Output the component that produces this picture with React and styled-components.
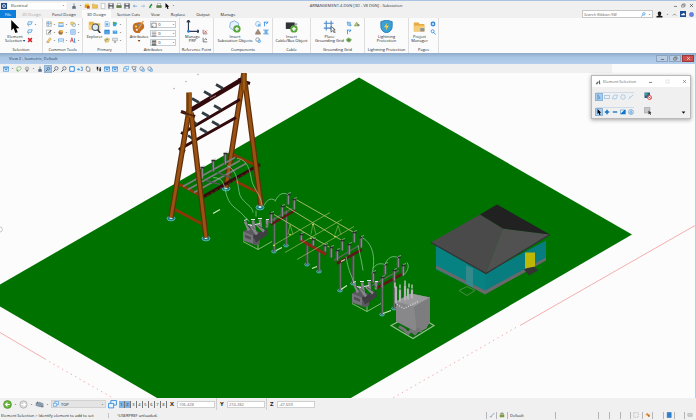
import React from "react";
import styled, { createGlobalStyle } from "styled-components";

const GlobalStyle = createGlobalStyle`
  * {
    box-sizing: border-box;
  }
  body {
    background: #f0f0f0;
    color: #222;
    font-family: "Open Sans", "Noto Sans", sans-serif;
    font-size: 4px;
    line-height: 5px;
    margin: 0;
  }
  button, input, select {
    background: none;
    border: 0;
    border-radius: 0;
    color: inherit;
    font: inherit;
    margin: 0;
    padding: 0;
  }
  svg {
    display: block;
  }
`;

const BLUE = "#1e80d8";
const GRAY = "#7c8288";

// Icons, all drawn on a 16 x 16 grid

const shapes = {
  caret: <path d="M3 6h10l-5 5z" fill="#555" />,
  cursor: <path d="M4 0v13l3-3 2 6 3-1-2-5h4z" fill="#050505" />,
  fence: (
    <g fill="none" stroke={BLUE} strokeWidth="1.5">
      <path d="M4 2h10l-3 7H1z" fill="#e6f1fb" />
      <path d="M3 10l2 5" stroke={GRAY} />
    </g>
  ),
  cross: <path d="M3 3l10 10M13 3L3 13" stroke="#d9202c" strokeWidth="4" />,
  sheet: (
    <g fill="none" stroke={GRAY} strokeWidth="1.4">
      <path d="M2 2h12v12H2z" fill="#fff" />
      <path d="M2 6h12M6 2v12" stroke={BLUE} />
      <path d="M9 10l5-5" stroke="#e08a1c" strokeWidth="2" />
    </g>
  ),
  layers: (
    <g>
      <path d="M1 3h14v3H1z" fill="#e3a83a" />
      <path d="M2 7h12v6H2z" fill="#eef5fc" stroke={BLUE} />
      <path d="M1 14h14" stroke={BLUE} strokeWidth="2" />
    </g>
  ),
  globe: (
    <g>
      <path d="M2 3h8l4 5-6 6-6-4z" fill="#f5cf6b" stroke="#c08b2b" />
      <circle cx="11" cy="11" r="4" fill="#e9f2fb" stroke={BLUE} />
    </g>
  ),
  pen: (
    <g>
      <path d="M1 3h11v11H1z" fill="#fff" stroke="#555" />
      <path d="M5 11l8-9 2 2-8 8z" fill="#444" />
    </g>
  ),
  ball: (
    <g>
      <circle cx="7" cy="9" r="6" fill="#b06a20" />
      <path d="M4 7l8-5 2 4-6 4z" fill="#efb34d" />
      <circle cx="5" cy="11" r="2" fill="#4f7ec4" />
    </g>
  ),
  pattern: (
    <g fill="#e9f3fd" stroke={BLUE} strokeWidth="1.3">
      <path d="M2 2h12v12H2z" />
      <path d="M2 8h12M8 2v12" strokeDasharray="2 1" />
    </g>
  ),
  ruler: (
    <g>
      <path d="M2 13L10 2l4 3-7 9z" fill="#f6d27a" stroke="#a77918" />
      <path d="M1 15h8" stroke="#555" />
    </g>
  ),
  slot: (
    <g fill="none" stroke={BLUE} strokeWidth="1.4">
      <path d="M1 5h14v6H1z" fill="#e9f3fd" />
      <path d="M1 13v2M15 13v2" />
    </g>
  ),
  letter: (
    <g fill="none" strokeWidth="2">
      <path d="M1 14L5 2l4 12M3 10h5" stroke="#d22f2f" />
      <path d="M12 3v11M10 14h5" stroke={BLUE} />
    </g>
  ),
  explorer: (
    <g>
      <path d="M1 2h6l1 2h7v8H1z" fill="#e8b749" />
      <path d="M1 6h14v6H1z" fill="#f6d589" />
      <circle cx="9" cy="9" r="4" fill="#dfe9f2" stroke="#4a5560" strokeWidth="1.3" />
      <path d="M12 12l3 4" stroke="#333" strokeWidth="2" />
    </g>
  ),
  page: (
    <g>
      <path d="M3 1h8l3 3v11H3z" fill="#e8f3fd" stroke={BLUE} />
      <path d="M5 6h6v6H5z" fill="#6fa8dc" />
    </g>
  ),
  table: (
    <g>
      <path d="M1 2h14v12H1z" fill={BLUE} />
      <path d="M3 6h10M3 9h10M3 12h10" stroke="#cfe6fb" />
    </g>
  ),
  folder: (
    <g>
      <path d="M1 6l7-4 7 3-3 8-9 1z" fill="#f1d27c" stroke="#b8963a" />
      <path d="M3 9l8-3" stroke={BLUE} strokeWidth="2" />
    </g>
  ),
  link: (
    <g>
      <path d="M2 8l8-6 4 4-4 8H3z" fill="#39a9dc" />
      <circle cx="5" cy="5" r="3" fill="#52a845" />
    </g>
  ),
  attach: (
    <g>
      <path d="M2 4h12v9H2z" fill="#4aa3e6" />
      <path d="M2 4l4-2h4v5z" fill="#b7dcf7" />
    </g>
  ),
  model: (
    <g fill="#dfe3e6" stroke={GRAY}>
      <path d="M1 3h14v7H1z" />
      <path d="M5 14h6M8 10v4" strokeWidth="2" />
    </g>
  ),
  palette: (
    <g>
      <path d="M7 3c5-1 8 1 8 5s-4 4-5 7-9 1-9-5 2-6 6-7z" fill="#c36d22" />
      <circle cx="5" cy="8" r="1.3" fill="#f6dc5b" />
      <circle cx="9" cy="6" r="1.3" fill="#4d9bea" />
      <circle cx="6" cy="12" r="1.3" fill="#f2f2f2" />
      <path d="M8 11l6-10" stroke="#d7a15a" strokeWidth="1.5" />
    </g>
  ),
  square: <path d="M2 3h12v11H2zM2 14l4-4" fill="#fff" stroke="#555" strokeWidth="1.6" />,
  lines: <path d="M2 3h12M2 7h12M2 11h12M2 14h12" stroke="#666" strokeWidth="1.6" />,
  weight: <path d="M2 3h12M2 8h12M2 13h12" stroke="#444" strokeWidth="3" />,
  axis: (
    <g fill="none" stroke="#2e3c55" strokeWidth="1.4">
      <path d="M3 1v13h13" />
      <path d="M1 3l2-3 2 3M14 12l2 2-2 2" />
      <circle cx="3" cy="14" r="1" fill={BLUE} stroke={BLUE} />
    </g>
  ),
  axisOff: (
    <g fill="none" strokeWidth="1.8">
      <path d="M3 2v11h11" stroke="#555" />
      <path d="M6 4l7 7M13 4l-7 7" stroke="#d22f2f" />
    </g>
  ),
  axisSet: (
    <g fill="none" stroke="#444" strokeWidth="1.8">
      <path d="M3 2v11h11" />
      <path d="M6 9l4-5 3 4" />
    </g>
  ),
  insert: (
    <g>
      <path d="M3 3l5-2 5 3v6l-6 3-5-4z" fill="#e7f2fc" stroke="#6ba5df" />
      <circle cx="11" cy="11" r="4.5" fill="#5aa53a" />
      <path d="M11 8.5v5M8.5 11h5" stroke="#fff" strokeWidth="1.5" />
    </g>
  ),
  hexes: (
    <g fill="#edf5fc" stroke={BLUE}>
      <path d="M4 2l6-1 4 5-3 7-7 1-3-6z" />
      <path d="M9 9h5v5H9z" fill="#9fc5e8" />
    </g>
  ),
  tower: <path d="M6 2h4v5h3l2 7H1l2-7h3z" fill="#a58a78" stroke="#6f5a4c" />,
  peak: (
    <g>
      <path d="M1 13L7 3l7 10z" fill="#b7cf6e" stroke="#6d8a35" strokeWidth="1.5" />
      <path d="M9 8h5v5H9z" fill="#7d8790" />
    </g>
  ),
  bay: (
    <g fill="none" stroke={BLUE} strokeWidth="2">
      <path d="M2 3h12M4 3v11M12 3v3M8 8l4-3" />
    </g>
  ),
  bus: (
    <g fill="none" stroke={BLUE} strokeWidth="2">
      <path d="M1 3h14M3 8h10M1 13h14M8 3v10" />
    </g>
  ),
  cable: (
    <g>
      <path d="M1 3h11v8H1z" fill="#2e3338" />
      <path d="M12 5h3M12 8h3" stroke="#9aa2a8" strokeWidth="2" />
      <circle cx="11" cy="11" r="4.5" fill="#5aa53a" />
      <path d="M11 8.5v5M8.5 11h5" stroke="#fff" strokeWidth="1.5" />
    </g>
  ),
  grid: (
    <g>
      <path d="M4 1v12M10 1v12M1 4h12M1 10h12" stroke="#4a86c5" strokeWidth="1.3" />
      <path d="M10 8v7l2-2 2 3 1-1-2-3h2z" fill="#fff" stroke="#333" strokeWidth=".8" />
    </g>
  ),
  gridSmall: (
    <path d="M5 1v10M11 3v11M2 5h10M4 11h11" stroke={BLUE} strokeWidth="1.8" />
  ),
  rod: (
    <g>
      <path d="M1 6l6-4 8 5-6 7-7-3z" fill="#8fbf6a" stroke="#4c8a35" />
      <path d="M6 5v6M10 6v5" stroke="#2d5e22" strokeWidth="2" />
    </g>
  ),
  shield: (
    <g>
      <path d="M8 0l7 2v6c0 4-3 7-7 8-4-1-7-4-7-8V2z" fill="#39a0d8" stroke="#2275ab" />
      <path d="M9 3L5 9h3l-1 4 4-6H8z" fill="#ffd53b" />
    </g>
  ),
  project: (
    <g>
      <path d="M1 3h6l1 2h6v9H1z" fill="#e6ab43" />
      <path d="M1 7h13v7H1z" fill="#f3cd78" />
      <path d="M9 10h5v4H9z" fill="#8894a1" />
    </g>
  ),
  gear: (
    <g fill="none" stroke={BLUE}>
      <circle cx="8" cy="8" r="5" strokeWidth="3" />
      <circle cx="8" cy="8" r="1.5" />
    </g>
  ),
  search: (
    <g fill="none" stroke={BLUE} strokeWidth="2">
      <circle cx="7" cy="6" r="4" />
      <path d="M10 9l5 6" />
    </g>
  ),
  find: (
    <g fill="none" stroke={BLUE} strokeWidth="2">
      <circle cx="9" cy="6" r="4" />
      <path d="M6 9l-5 6" />
    </g>
  ),
  zoomIn: (
    <g fill="none" stroke="#3c4650" strokeWidth="1.6">
      <circle cx="9" cy="6" r="4.5" fill="#e5f0fa" />
      <path d="M6 10l-5 5" strokeWidth="2.5" />
    </g>
  ),
  zoomWindow: (
    <g fill="none" stroke="#3c4650" strokeWidth="1.6">
      <path d="M1 1h14v14H1z" stroke="#9ab9d6" />
      <circle cx="9" cy="7" r="3.5" />
      <path d="M6 10l-4 4" strokeWidth="2" />
    </g>
  ),
  fit: <path d="M2 2h12v12H2z" fill="#fff" stroke={BLUE} strokeWidth="2.5" />,
  rotate: (
    <g fill="none" stroke={BLUE} strokeWidth="2">
      <path d="M1 9h7M5 6L2 9l3 3M10 3h4v9h-4" />
    </g>
  ),
  pan: <path d="M4 2h5l4 4v8H6L3 9z" fill="#f2f2f2" stroke="#444" strokeWidth="1.5" />,
  walk: <path d="M2 2h4v7H2zM9 6h4v8H9zM3 10h3v2H3zM10 3h3v2h-3z" fill="#222" />,
  windows: (
    <g fill="#e7f2fc" stroke={BLUE} strokeWidth="1.6">
      <path d="M1 2h14v12H1z" />
      <path d="M1 5h14M5 9h6" strokeWidth="2.5" />
    </g>
  ),
  copyView: (
    <g fill="#eaf4fd" stroke={BLUE} strokeWidth="1.4">
      <path d="M5 1h10v8H5z" />
      <path d="M1 6h9v8H1z" />
    </g>
  ),
  clip: (
    <g fill="none" stroke="#4f5961" strokeWidth="1.5">
      <path d="M2 2h12l-3 7H5z" />
      <circle cx="10" cy="12" r="3" stroke={BLUE} />
    </g>
  ),
  mask: (
    <g fill="none" stroke="#5c6b78" strokeWidth="1.5">
      <circle cx="7" cy="7" r="5" />
      <path d="M8 8h6v6H8z" fill="#dbeafa" stroke={BLUE} />
    </g>
  ),
  display: (
    <g>
      <path d="M3 3l9-1 2 6-8 6-4-5z" fill="#eef6ea" stroke="#67a458" strokeWidth="1.4" />
      <circle cx="4" cy="12" r="2.5" fill="#6bb95a" />
    </g>
  ),
  bulb: (
    <g>
      <circle cx="8" cy="7" r="5" fill="#c9ccc6" stroke="#7b7f77" />
      <path d="M6 13h4" stroke="#444" strokeWidth="3" />
    </g>
  ),
  brush: <path d="M7 1h2v7h3l1 7H3l1-7h3z" fill="#5b6d7d" />,
  person: <path d="M8 1c3 0 4 2 4 4s-1 4-2 5l5 2v3H1v-3l5-2C5 9 4 7 4 5s1-4 4-4z" fill="#1b1b1b" />,
  database: (
    <g>
      <ellipse cx="8" cy="4" rx="6" ry="3" fill="#f4cc4f" />
      <path d="M2 5v8h12V5z" fill="#e39b22" />
      <path d="M8 8h7v7H8z" fill="#b8532e" />
    </g>
  ),
  openFolder: <path d="M1 3h5l2 2h7v9H1z" fill="#efc14d" stroke="#c08f25" />,
  blank: <path d="M3 1h10v14H3z" fill="#fff" stroke={GRAY} />,
  save: (
    <g>
      <path d="M1 1h14v14H1z" fill="#454b52" />
      <path d="M4 1h8v5H4zM4 9h8v6H4z" fill="#eceff1" />
    </g>
  ),
  undo: <path d="M2 8l5-4v3h7v2H7v3z" fill="#6fa6dd" />,
  redo: <path d="M14 8L9 4v3H2v2h7v3z" fill="#9cbfe0" />,
  pin: <path d="M9 1l3 4-4 4 1 6-3-4-4 4 2-7z" fill="#2f8f46" />,
  print: (
    <g>
      <path d="M4 1h8v6H4z" fill="#fff" stroke="#666" />
      <path d="M1 6h14v7H1z" fill="#5e7e4a" />
    </g>
  ),
  circleTool: <circle cx="8" cy="8" r="6" fill="none" stroke="#76b0e6" strokeWidth="1.5" />,
  blockTool: <path d="M1 4h14v8H1z" fill="none" stroke="#76b0e6" strokeWidth="1.5" />,
  shapeTool: <path d="M5 3h10l-4 10H1z" fill="none" stroke="#76b0e6" strokeWidth="1.5" />,
  lineTool: <path d="M1 14L14 2M3 9l3-1" fill="none" stroke="#76b0e6" strokeWidth="1.5" />,
  handTool: <path d="M5 2v12l3-3h3z" fill="none" stroke="#2d78bd" strokeWidth="1.5" />,
  plus: <path d="M8 2v12M2 8h12" stroke="#1372c4" strokeWidth="4" />,
  minus: <path d="M2 8h12" stroke="#1372c4" strokeWidth="3.5" />,
  invert: (
    <g>
      <path d="M1 2h14v12H1z" fill="#1372c4" />
      <path d="M2 3h9l-9 9z" fill="#fff" />
    </g>
  ),
  clear: (
    <g fill="none" stroke="#3987ce" strokeWidth="1.5">
      <circle cx="8" cy="8" r="6.5" />
      <path d="M8 4l3 7H5z" />
    </g>
  ),
  disable: (
    <g>
      <path d="M1 1h11v11H1z" fill="#2c5f86" />
      <path d="M2 2h5v5H2z" fill="#3da48e" />
      <circle cx="11" cy="11" r="4" fill="#fff" stroke="#d83a3a" strokeWidth="1.8" />
      <path d="M8 9l6 4" stroke="#d83a3a" strokeWidth="1.8" />
    </g>
  ),
  individual: (
    <g>
      <path d="M1 1h11v11H1z" fill="#c4c6c8" stroke="#8e9194" />
      <path d="M9 7v8l2-2 2 3 1-1-1-3h2z" fill="#333" />
    </g>
  ),
  more: <path d="M2 5h12l-6 7z" fill="#111" />,
  logo: <path d="M2 14l4-8 2 3 5-7 1 12h-3l-1-6-4 6z" fill="#5c6268" />,
  back: (
    <g>
      <circle cx="8" cy="8" r="7" fill="#69b53c" stroke="#3e8526" />
      <path d="M12 8H5M8 4.5L4.5 8 8 11.5" stroke="#fff" strokeWidth="2" fill="none" />
    </g>
  ),
  forward: (
    <g>
      <circle cx="8" cy="8" r="6.5" fill="#dcdcdc" stroke="#9a9a9a" />
      <path d="M4 8h7M8 4.5l3.5 3.5L8 11.5" stroke="#fff" strokeWidth="2" fill="none" />
    </g>
  ),
  camera: (
    <g>
      <path d="M1 6l7-3 7 3v5l-6 2-8-3z" fill="#8b9aab" />
      <path d="M3 6l2-3M11 12h4" stroke="#4e6379" strokeWidth="2" />
    </g>
  ),
  snap: <path d="M2 13h4l2-4 6-6" fill="none" stroke="#6b86b3" strokeWidth="2" />,
  lock: (
    <g>
      <path d="M2 7h12v7H2z" fill="#7a9a3b" />
      <path d="M5 7V3h6v4" fill="none" stroke="#5d6a43" strokeWidth="2" />
    </g>
  ),
  fenceBox: <path d="M2 2h12v12H2z" fill="none" stroke="#999" strokeWidth="1.5" strokeDasharray="3 2" />,
  badge: (
    <g>
      <path d="M1 7l6-5 2 4 6 1-6 7-2-4z" fill="#e3912e" />
      <path d="M8 8l4 5" stroke="#b0481f" strokeWidth="2" />
    </g>
  ),
  book: <path d="M3 1h11v14H3z" fill="#2c7fd0" stroke="#1b5fa6" />,
  dots: <path d="M2 4h12v7H2zM5 11v3M11 11v3" fill="#cfcfcf" stroke="#9a9a9a" />,
  app: (
    <g>
      <path d="M0 0h16v16H0z" fill="#234f8e" />
      <circle cx="8" cy="8" r="4" fill="none" stroke="#fff" strokeWidth="2" />
    </g>
  ),
  minimize: <path d="M3 11h10" stroke="#444" strokeWidth="2" />,
  restore: <path d="M2 6h8v7H2zM5 6V3h8v7h-3" fill="none" stroke="#555" strokeWidth="1.8" />,
  box: <path d="M3 3h10v10H3z" fill="none" stroke="#ccc" strokeWidth="1.5" />,
  close: <path d="M3 3l10 10M13 3L3 13" stroke="currentColor" strokeWidth="1.8" />,
  up: <path d="M3 11l5-5 5 5" fill="none" stroke="#555" strokeWidth="2" />,
  help: <circle cx="8" cy="8" r="7" fill="#6d7fe0" stroke="#4456b6" />,
  cloud: (
    <g>
      <path d="M0 0h16v16H0z" fill="#1f4e91" />
      <path d="M3 11h10V8l-3-3-3 2-3 1z" fill="#fff" />
    </g>
  ),
};

const Icon = ({ name, size = 6 }) => (
  <Glyph $size={size} viewBox="0 0 16 16" aria-hidden="true">
    {shapes[name]}
  </Glyph>
);

const Tool = ({ icon, size, active }) => (
  <ToolButton type="button" aria-label={icon} $active={active}>
    <Icon name={icon} size={size} />
  </ToolButton>
);

const quickTools = ["brush", "caret", "database", "openFolder", "blank", "save", "print", "save", "undo", "redo", "pin", "print", "cursor", "caret"];

const tabs = ["2D Design", "Panel Design", "3D Design", "Section Cuts", "View", "Replace", "Output", "Manage"];

// one list per block of the view toolbar
const viewTools = [
  ["windows", "caret", "display", "bulb", "caret", "brush", "zoomWindow", "zoomIn", "zoomIn", "fit", "rotate", "pan"],
  ["walk", "windows", "windows"],
  ["copyView", "clip", "mask", "mask"],
];

const TitleBar = () => (
  <Title>
    <Icon name="app" size={6} />
    <Picker $width={60}>
      <select aria-label="Workflow" defaultValue="Electrical">
        <option>Electrical</option>
      </select>
      <Icon name="caret" size={3} />
    </Picker>
    <QuickBar>
      {quickTools.map((icon, i) => (
        <Tool key={i} icon={icon} size={icon === "caret" ? 3 : 6} />
      ))}
    </QuickBar>
    <Caption>ARRANGEMENT-4.DGN [3D - V8 DGN] - Substation</Caption>
    <WindowControls>
      <Tool icon="minimize" size={5} />
      <Tool icon="restore" size={5} />
      <Tool icon="close" size={5} />
    </WindowControls>
  </Title>
);

const TabBar = () => (
  <Tabs>
    <FileTab type="button">File</FileTab>
    {tabs.map((tab) => (
      <Tab key={tab} type="button" $active={tab === "3D Design"} $dim={tab === "2D Design"}>
        {tab}
      </Tab>
    ))}
    <TabTools>
      <SearchBox>
        <input aria-label="Search Ribbon" placeholder="Search Ribbon (F4)" />
        <Icon name="find" size={5} />
        <Icon name="caret" size={3} />
      </SearchBox>
      <Tool icon="person" size={7} />
      <Icon name="caret" size={3} />
      <Tool icon="up" size={5} />
      <Tool icon="cloud" size={6} />
      <Tool icon="help" size={5} />
    </TabTools>
  </Tabs>
);

const Launch = ({ icon, lines, size = 13 }) => (
  <LaunchButton type="button">
    <Icon name={icon} size={size} />
    <span>
      {lines.map((line) => (
        <Line key={line}>{line}</Line>
      ))}
    </span>
  </LaunchButton>
);

const Group = ({ label, width, children }) => (
  <RibbonGroup $width={width}>
    <GroupBody>{children}</GroupBody>
    <GroupLabel>{label}</GroupLabel>
  </RibbonGroup>
);

// a column of small tools, some with their own drop-down arrow
const Column = ({ icons, menu }) => (
  <ToolColumn>
    {icons.map((icon) => (
      <ToolRow key={icon}>
        <Tool icon={icon} />
        {menu && <Icon name="caret" size={3} />}
      </ToolRow>
    ))}
  </ToolColumn>
);

const Ribbon = () => (
  <RibbonBar>
    <Group label="Selection" width={43}>
      <Launch icon="cursor" lines={["Element", "Selection ▾"]} />
      <ToolColumn>
        <ToolRow>
          <Tool icon="fence" />
          <Icon name="caret" size={3} />
        </ToolRow>
        <ToolRow>
          <Tool icon="fence" />
        </ToolRow>
        <ToolRow>
          <Tool icon="cross" />
        </ToolRow>
      </ToolColumn>
    </Group>
    <Group label="Common Tools" width={40}>
      <Column icons={["sheet", "pen", "ruler"]} menu />
      <Column icons={["layers", "ball", "slot"]} menu />
      <Column icons={["globe", "pattern", "letter"]} menu />
    </Group>
    <Group label="Primary" width={44}>
      <Launch icon="explorer" lines={["Explorer"]} />
      <Column icons={["page", "table", "folder"]} />
      <Column icons={["link", "attach", "model"]} menu />
    </Group>
    <Group label="Attributes" width={53}>
      <Launch icon="palette" lines={["Attributes", "▾"]} />
      <ToolColumn>
        {["square", "lines", "weight"].map((icon) => (
          <Setting key={icon}>
            <Icon name={icon} size={6} />
            <select aria-label={icon} defaultValue="0">
              <option>0</option>
            </select>
            <Icon name="caret" size={3} />
          </Setting>
        ))}
      </ToolColumn>
    </Group>
    <Group label="Reference Point" width={34}>
      <Launch icon="axis" lines={["Manage", "PRP"]} />
      <ToolColumn>
        <ToolRow />
        <Tool icon="axisOff" />
        <Tool icon="axisSet" />
      </ToolColumn>
    </Group>
    <Group label="Components" width={59}>
      <Launch icon="insert" lines={["Insert", "Substation Objects"]} />
      <Column icons={["hexes", "tower", "mask"]} />
      <ToolColumn>
        <Tool icon="bay" />
        <Tool icon="bus" />
        <ToolRow />
      </ToolColumn>
    </Group>
    <Group label="Cable" width={38}>
      <Launch icon="cable" lines={["Insert", "Cable/Bus Object"]} />
    </Group>
    <Group label="Grounding Grid" width={54}>
      <Launch icon="grid" lines={["Place", "Grounding Grid"]} />
      <Column icons={["gridSmall", "bay", "rod"]} />
      <ToolColumn>
        <Tool icon="peak" />
        <ToolRow />
        <ToolRow />
      </ToolColumn>
    </Group>
    <Group label="Lightning Protection" width={44}>
      <Launch icon="shield" lines={["Lightning", "Protection"]} />
    </Group>
    <Group label="Pages" width={30}>
      <Launch icon="project" lines={["Project", "Manager"]} />
      <ToolColumn>
        <Tool icon="gear" />
        <Tool icon="search" />
        <ToolRow />
      </ToolColumn>
    </Group>
  </RibbonBar>
);

const ViewHeader = () => (
  <>
    <ViewTitle>
      <ViewName>View 2 - Isometric, Default</ViewName>
      <ViewButton type="button" aria-label="Minimize view">
        <Icon name="minimize" size={5} />
      </ViewButton>
      <ViewButton type="button" aria-label="Restore view">
        <Icon name="restore" size={5} />
      </ViewButton>
      <ViewButton type="button" aria-label="Close view" $close>
        <Icon name="close" size={5} />
      </ViewButton>
    </ViewTitle>
    <ViewTools>
      {viewTools.map((block, n) => (
        <ViewBlock key={n}>
          {block.map((icon, i) => (
            <Tool key={i} icon={icon} size={icon === "caret" ? 3 : 6} active={icon === "zoomWindow"} />
          ))}
        </ViewBlock>
      ))}
    </ViewTools>
  </>
);

// Scene

const Insulator = ({ x, y, h = 10 }) => (
  <g>
    <path d={`M${x} ${y}v${-h}`} stroke="#5b5b60" strokeWidth="2.6" />
    <path d={`M${x + 0.6} ${y}v${-h}`} stroke="#929297" strokeWidth="0.9" />
    <path d={`M${x - 1.5} ${y - h}h4`} stroke="#2c2c30" strokeWidth="1.6" />
    <path d={`M${x} ${y - h - 1}l3-1`} stroke="#c4c4c8" strokeWidth="0.6" />
  </g>
);

const Footing = ({ x, y, r = 4 }) => (
  <g>
    <ellipse cx={x} cy={y} rx={r} ry={r * 0.6} fill="#177f80" stroke="#63bcbc" strokeWidth="0.8" />
    <ellipse cx={x} cy={y - 0.5} rx={r * 0.4} ry={r * 0.25} fill="#d6f4f4" />
  </g>
);

const Post = ({ x, top, bottom }) => (
  <g>
    <Footing x={x} y={bottom} r={2.4} />
    <path d={`M${x} ${top}V${bottom}`} stroke="#4c524e" strokeWidth="2.4" />
    <path d={`M${x + 0.7} ${top}V${bottom}`} stroke="#8d8f90" strokeWidth="0.6" />
  </g>
);

const Leg = ({ d }) => (
  <g fill="none">
    <path d={d} stroke="#5e2f08" strokeWidth="5.4" />
    <path d={d} stroke="#9a5112" strokeWidth="3" />
  </g>
);

const Breaker = ({ x, y }) => (
  <g transform={`translate(${x} ${y})`}>
    <path d="M0 13l15 8 14-8M15 21l0-6" fill="none" stroke="#b7d7a8" strokeWidth="0.7" />
    <path d="M0 3l7-4 10 5v11l-4 2L0 12z" fill="#59595e" />
    <path d="M0 3l10 4v8L0 12z" fill="#74747a" />
    <path d="M2 6l6 2.5v3L2 9z" fill="#515156" />
    <path d="M10 7l14-7 1 6-12 8z" fill="#3e3e43" />
    <g stroke="#86868c" strokeWidth="2.6">
      <path d="M6 2L2-7M12 4L10-8M18 1L17-9M24-1V-9M14 6L7-4M21 3L14-4" />
    </g>
    <g stroke="#3c3c40" strokeWidth="0.7">
      <path d="M4-4L7 0M9-2L12 1M15-3l5 3M21-6l4 4M10 9l8-4" />
    </g>
    <g stroke="#e4e4ea" strokeWidth="1">
      <path d="M1-8l3-1M8-9l4 0M15-10l4 0M5-4l4 1M12-4l5-1M23-9l3 0" />
    </g>
  </g>
);

const Gantry = () => (
  <g fill="none">
    <g stroke="#8c3608" strokeWidth="2.8">
      <path d="M175 209l28 15M236 181l26 13M180 184l24 13M233 154l25 12" />
    </g>
    <Footing x="226" y="188" />
    <Leg d="M244 72l-18 115" />
    <g stroke="#7b7e7c" strokeWidth="1.8">
      <path d="M183 186l52-29M188 189l52-29M194 192l52-29" />
      <path d="M206 180l14 4M217 172l14 5" stroke="#54585a" />
    </g>
    <Insulator x={202} y={178} h={11} />
    <Insulator x={213} y={171} h={11} />
    <Insulator x={225} y={164} h={11} />
    <g stroke="#330a0c">
      <path d="M190 110l52-31" strokeWidth="4.6" />
      <path d="M187 130l53-31M179 149l57-32" strokeWidth="3" />
      <path d="M202 197l58-33" strokeWidth="3.2" />
      <path d="M181 111l14 5M238 79l12 4M181 132l6 3M179 148l6 3" strokeWidth="3" />
    </g>
    <path d="M210 98l6-3" stroke="#b98e92" strokeWidth="0.8" />
    <path d="M202 198l58-33" stroke="#823232" strokeWidth="0.6" strokeDasharray="3 2" />
    <g stroke="#323c42" strokeWidth="2.6">
      <path d="M216 84l7 4M204 91l7 4M192 98l7 4" />
      <path d="M214 105l7 4M202 112l7 4M192 120l5 4" />
      <path d="M212 121l7 4M200 128l7 4M188 135l6 4" />
    </g>
    <Footing x="171" y="218" />
    <Footing x="206" y="238" />
    <Footing x="260" y="207" />
    <Leg d="M245 82l16 123" />
    <Leg d="M189 110l-18 107" />
    <Leg d="M191 112l15 125" />
    <path d="M189 92v25M244 73v17" stroke="#75400d" strokeWidth="5.6" />
    <path d="M190 92v25M244 73v17" stroke="#a05815" strokeWidth="2.5" />
    <path d="M181 111l14 5" stroke="#4a2210" strokeWidth="1.5" />
  </g>
);

const Wires = () => (
  <g fill="none" stroke="#93cda0" strokeWidth="0.7">
    <path d="M213 177c12 0 11 10 14 19 4 12 12 12 19 22" />
    <path d="M227 165c12 5 10 21 13 30 4 8 13 11 13 17" />
    <path d="M237 158c14 1 13 20 16 26 5 10 8 13 9 21" />
    <path d="M264 205c4-8 9-7 11-5M275 201c4-9 9-9 13-7M246 217l3 4M256 210v6" />
    <path d="M346 256c2 12 4 16 8 26M358 245c2 9 4 18 5 25M362 237c13 7 13 25 10 36" />
    <path d="M373 268c4-6 8-5 12-4M385 264c3-8 8-9 13-7M407 262c3 4 0 10-4 13" />
  </g>
);

const Bay = () => (
  <g>
    <Post x={274} top={217} bottom={251} />
    <Post x={286} top={210} bottom={245} />
    <Post x={307} top={244} bottom={264} />
    <Post x={319} top={249} bottom={271} />
    <Post x={340} top={262} bottom={290} />
    <Post x={353} top={254} bottom={283} />
    <Post x={382} top={286} bottom={314} />
    <Post x={394} top={278} bottom={308} />
    <g stroke="#5c1a16" strokeWidth="2.6">
      <path d="M271 224l24-14M337 263l25-14M376 288l27-15" />
      <path d="M268 222l24-14M334 260l25-15M372 285l27-15" stroke="#6d6466" strokeWidth="1.2" />
      <path d="M300 239l26 15" stroke="#8c2418" strokeWidth="3" />
    </g>
    <g stroke="#a5b76c" strokeWidth="1" fill="none">
      <path d="M296 199l58 33M286 206l56 34M274 214l56 33" />
      <path d="M273 245l57-33M285 252l57-33M297 259l57-33" strokeWidth="0.7" />
      <path d="M288 234l2-10 3 10M311 234l2-11 3 11M335 234l3-9 3 9" strokeWidth="0.6" />
    </g>
    <g fill="#e6e85c">
      <circle cx="290" cy="234" r="0.8" />
      <circle cx="313" cy="224" r="0.8" />
      <circle cx="335" cy="236" r="0.8" />
      <circle cx="311" cy="238" r="0.8" />
      <circle cx="274" cy="245" r="0.8" />
    </g>
    {[[301, 240], [313, 245], [325, 251]].map(([x, y]) => (
      <Insulator key={x} x={x} y={y} h={6} />
    ))}
    {[[271, 223], [282, 216], [294, 209], [288, 204], [331, 257], [342, 250], [354, 242], [361, 247], [349, 254], [337, 260]].map(([x, y]) => (
      <Insulator key={x} x={x} y={y} />
    ))}
    {[[373, 282], [385, 274], [398, 267], [382, 287], [394, 280], [403, 275]].map(([x, y]) => (
      <Insulator key={x} x={x} y={y} />
    ))}
    <g stroke="#c9ebbc" strokeWidth="1.2">
      <path d="M213 213l7-4M276 250l6-3M312 268l5-2M341 289l6-4M383 313l8-3M341 261l4-2" />
    </g>
  </g>
);

const Transformer = () => (
  <g>
    <path d="M391 325l22 13 21-13-20-12z" fill="#0a6a0a" stroke="#8fc28c" strokeWidth="1.2" />
    <path d="M396 301l15-8 19 4v24l-4 7-9 4-21-11z" fill="#88888b" />
    <path d="M396 301l15-8 19 4-16 9z" fill="#9b9b9e" />
    <path d="M414 306l16-9v24l-4 7-9 4z" fill="#7d7d80" />
    <path d="M399 326l5 3 4 4 3-3 4 3 3-4 4 2" fill="none" stroke="#747477" strokeWidth="3" />
    <g stroke="#b3b3b8" strokeWidth="2.2">
      <path d="M396 303v-17M400 301v-12M405 300v-15M408 299v-11M412 298v-9" />
    </g>
    <g stroke="#e2e2e6" strokeWidth="1.1">
      <path d="M395 287v-5M400 288v-4M405 285v-5M409 287v-4M412 288v-4" />
      <path d="M397 304l7 4 14-7" strokeDasharray="1 1.5" fill="none" />
    </g>
  </g>
);

const House = () => (
  <g>
    <path d="M436 245v24l49 24v-20z" fill="#078282" />
    <path d="M485 273v20l61-34v-19z" fill="#087d80" />
    <path d="M436 265v3l49 26 61-34v-3l-61 33z" fill="#69686a" />
    <path d="M466 265l7 3v19l-7-4z" fill="#36898b" />
    <path d="M459 290l8-4 8 4-8 5z" fill="none" stroke="#4b8c43" />
    <path d="M524 269l9-4 5 5-9 5z" fill="#333" />
    <path d="M525 252h10v14l-10 2z" fill="#bdb806" />
    <path d="M431 242l49-28 23 14-17 45z" fill="#4a4a4b" />
    <path d="M503 228l47 6-64 39z" fill="#515152" />
    <path d="M480 214l17-10 53 30-47-6z" fill="#212122" />
    <path d="M431 242l55 31 64-39" fill="none" stroke="#323233" strokeWidth="1.2" />
  </g>
);

const Scene = () => (
  <Drawing viewBox="0 72 695 326" preserveAspectRatio="xMidYMid slice" role="img" aria-label="Substation">
    <path d="M0 284L359 77l273 157-282 164H158L0 306z" fill="#007200" />
    <g fill="none" stroke="#f08c8c" strokeWidth="0.7">
      <path d="M0 332l46 27M695 225L520 325" />
      <path d="M49 361l63 36M516 327L392 398" strokeDasharray="1.5 3.5" />
    </g>
    <circle cx="0" cy="229" r="2.5" fill="none" stroke="#aaa" strokeWidth="0.6" />
    <g fill="#c8a8a0">
      <circle cx="174" cy="88" r="0.8" />
      <circle cx="186" cy="81" r="0.8" />
      <circle cx="198" cy="74" r="0.8" />
    </g>
    <Gantry />
    <Bay />
    <Breaker x={243} y={228} />
    <Breaker x={352} y={290} />
    <Wires />
    <Transformer />
    <House />
  </Drawing>
);

const SelectionDialog = () => (
  <Dialog role="dialog" aria-label="Element Selection">
    <DialogTitle>
      <DialogName>
        <Icon name="logo" size={6} />
        Element Selection
      </DialogName>
      <Tool icon="minimize" size={5} />
      <Tool icon="box" size={5} />
      <Tool icon="close" size={5} />
    </DialogTitle>
    <DialogBody>
      <DialogRow>
        <ToolSet>
          <Tool icon="handTool" active />
          <Tool icon="blockTool" />
          <Tool icon="shapeTool" />
          <Tool icon="circleTool" />
          <Tool icon="lineTool" />
        </ToolSet>
        <Tool icon="disable" size={8} />
      </DialogRow>
      <DialogRow>
        <ToolSet>
          <Tool icon="cursor" active />
          <Tool icon="plus" />
          <Tool icon="minus" />
          <Tool icon="invert" />
          <Tool icon="clear" />
        </ToolSet>
        <Tool icon="individual" size={8} />
        <More>
          <Icon name="more" size={5} />
        </More>
      </DialogRow>
    </DialogBody>
  </Dialog>
);

const StatusBar = () => (
  <Status>
    <NavRow>
      <Tool icon="back" size={9} />
      <Icon name="caret" size={3} />
      <Tool icon="forward" size={9} />
      <Icon name="caret" size={3} />
      <Tool icon="camera" size={9} />
      <Icon name="caret" size={3} />
      <Picker $width={55} $gray>
        <Icon name="copyView" size={6} />
        <select aria-label="View group" defaultValue="TOP">
          <option>TOP</option>
        </select>
        <Icon name="caret" size={3} />
      </Picker>
      <Tool icon="copyView" size={9} />
      <ViewToggles>
        {[1, 2, 3, 4, 5, 6, 7, 8].map((n) => (
          <Toggle key={n} type="button" $on={n < 3}>
            {n}
          </Toggle>
        ))}
      </ViewToggles>
      {[["X", "106.428"], ["Y", "274.282"], ["Z", "-47.659"]].map(([axis, value]) => (
        <Coordinate key={axis}>
          <b>{axis}</b>
          <input defaultValue={value} />
        </Coordinate>
      ))}
    </NavRow>
    <MessageRow>
      <Prompt>Element Selection &gt; Identify element to add to set</Prompt>
      <Message>°USERPREF unloaded.</Message>
      <Cell $width={10}><Icon name="snap" /></Cell>
      <Cell $width={11}><Icon name="lock" /></Cell>
      <Cell $width={48}>Default</Cell>
      <Cell $width={43} />
      <Cell $width={11} />
      <Cell $width={11} />
      <Cell $width={10} />
      <Cell $width={12}><Icon name="fenceBox" /></Cell>
      <Cell $width={10}><Icon name="badge" /></Cell>
      <Cell $width={11} />
      <Cell $width={11}><Icon name="book" /></Cell>
      <Cell $width={10} />
      <Cell $width={12}><Icon name="dots" /></Cell>
    </MessageRow>
  </Status>
);

const App = () => (
  <Page>
    <GlobalStyle />
    <TitleBar />
    <TabBar />
    <Ribbon />
    <ViewHeader />
    <Viewport>
      <Scene />
      <SelectionDialog />
    </Viewport>
    <StatusBar />
  </Page>
);

// Page

const Page = styled.div`
  display: flex;
  flex-direction: column;
  height: 100vh;
  overflow: hidden;
`;
const Glyph = styled.svg`
  flex: none;
  height: ${(p) => p.$size}px;
  width: ${(p) => p.$size}px;
`;
const ToolButton = styled.button`
  background: ${(p) => (p.$active ? "#a9cdf0" : "none")};
  box-shadow: ${(p) => (p.$active ? "0 0 0 1px #8fb2d3" : "none")};
  cursor: pointer;
  flex: none;
`;
const Picker = styled.label`
  align-items: center;
  background: ${(p) => (p.$gray ? "#e4e4e4" : "#fff")};
  border: 1px solid ${(p) => (p.$gray ? "#d2d2d2" : "#f6f6f6")};
  display: flex;
  height: 8px;
  padding: 0 1px;
  width: ${(p) => p.$width}px;

  select {
    appearance: none;
    flex: 1;
    min-width: 0;
    padding: 0 2px;
  }
`;

// Title bar

const Title = styled.header`
  align-items: center;
  border-top: 1px solid #a9c4e0;
  display: flex;
  flex: none;
  height: 10px;
  padding: 0 2px 0 1px;
`;
const QuickBar = styled.div`
  align-items: center;
  display: flex;
  gap: 2px;
  margin-left: 4px;
`;
const Caption = styled.div`
  color: #333;
  flex: 1;
  padding-right: 136px;
  text-align: center;
`;
const WindowControls = styled.div`
  display: flex;
  gap: 3px;
`;

// Tabs

const Tabs = styled.nav`
  display: flex;
  flex: none;
  gap: 1px;
  height: 8px;
`;
const Tab = styled.button`
  background: ${(p) => (p.$active ? "#fbfbfb" : "none")};
  color: ${(p) => (p.$dim ? "#a5a5a5" : "#222")};
  cursor: pointer;
  padding: 0 5px;
`;
const FileTab = styled(Tab)`
  background: #0d7fdb;
  color: #fff;
  width: 16px;
`;
const TabTools = styled.div`
  align-items: center;
  display: flex;
  gap: 3px;
  margin-left: auto;
  padding-right: 2px;
`;
const SearchBox = styled.label`
  align-items: center;
  background: #fff;
  border: 1px solid #c6c6c6;
  display: flex;
  gap: 2px;
  height: 8px;
  padding: 0 1px;
  width: 71px;

  input {
    flex: 1;
    min-width: 0;
  }
  input::placeholder {
    color: #666;
    font-style: italic;
  }
`;

// Ribbon

const RibbonBar = styled.section`
  background: #fbfbfb;
  display: flex;
  flex: none;
  height: 35px;
`;
const RibbonGroup = styled.div`
  border-right: 1px solid #dedede;
  display: flex;
  flex-direction: column;
  justify-content: space-between;
  padding: 1px 0;
  width: ${(p) => p.$width}px;
`;
const GroupBody = styled.div`
  display: flex;
  gap: 2px;
  justify-content: center;
`;
const GroupLabel = styled.div`
  text-align: center;
  white-space: nowrap;
`;
const LaunchButton = styled.button`
  align-items: center;
  cursor: pointer;
  display: flex;
  flex-direction: column;
  gap: 2px;
  padding-top: 1px;
`;
const Line = styled.span`
  display: block;
  line-height: 4px;
  white-space: nowrap;
`;
const ToolColumn = styled.div`
  display: flex;
  flex-direction: column;
  gap: 2px;
  padding-top: 2px;
`;
const ToolRow = styled.div`
  align-items: center;
  display: flex;
  gap: 1px;
  height: 6px;
`;
const Setting = styled.label`
  align-items: center;
  background: #fff;
  border: 1px solid #c4ccd4;
  display: flex;
  gap: 1px;
  height: 7px;
  width: 26px;

  select {
    appearance: none;
    flex: 1;
    line-height: 5px;
    min-width: 0;
  }
`;

// View

const ViewTitle = styled.div`
  align-items: center;
  background: linear-gradient(#8fabc9, #a9c5e4 40%, #b4cfee);
  display: flex;
  flex: none;
  gap: 1px;
  height: 11px;
  padding-right: 2px;
`;
const ViewName = styled.div`
  color: #24364a;
  flex: 1;
  padding-left: 9px;
`;
const ViewButton = styled.button`
  align-items: center;
  background: ${(p) => (p.$close ? "#cc4f4c" : "#b9cbe0")};
  border: 1px solid ${(p) => (p.$close ? "#9c3a3a" : "#8ca4bf")};
  color: #fff;
  display: flex;
  height: 7px;
  justify-content: center;
  width: 12px;
`;
const ViewTools = styled.div`
  align-items: center;
  background: linear-gradient(90deg, #f0f0f0 88%, #fbfbfb 88%);
  border-right: 1px solid #b3cdec;
  display: flex;
  flex: none;
  gap: 5px;
  height: 9px;
  padding-left: 3px;
`;
const ViewBlock = styled.div`
  align-items: center;
  display: flex;
  gap: 2px;
`;
const Viewport = styled.main`
  background: #fcfcfc;
  border-right: 1px solid #b3cdec;
  display: flex;
  flex: 1;
  min-height: 0;
  position: relative;
`;
const Drawing = styled.svg`
  flex: 1;
  height: 100%;
  min-width: 0;
`;

// Dialog

const Dialog = styled.section`
  background: #f0f0f0;
  border: 1px solid #b9b9b9;
  box-shadow: 0 1px 4px rgba(0, 0, 0, 0.35);
  position: absolute;
  right: 4px;
  top: 2px;
  width: 100px;
`;
const DialogTitle = styled.div`
  align-items: center;
  background: #fff;
  color: #666;
  display: flex;
  gap: 12px;
  height: 11px;
  padding: 0 4px 0 3px;
`;
const DialogName = styled.div`
  align-items: center;
  display: flex;
  flex: 1;
  gap: 2px;
  white-space: nowrap;
`;
const DialogBody = styled.div`
  display: flex;
  flex-direction: column;
  gap: 6px;
  padding: 4px 4px 3px;
`;
const DialogRow = styled.div`
  align-items: center;
  display: flex;
  gap: 10px;
  height: 9px;
`;
const ToolSet = styled.div`
  border-top: 1px solid #cfdbe6;
  display: flex;
  gap: 2px;
  padding-top: 1px;
`;
const More = styled.div`
  align-self: flex-end;
  margin-left: auto;
`;

// Status bar

const Status = styled.footer`
  flex: none;
`;
const NavRow = styled.div`
  align-items: center;
  display: flex;
  gap: 2px;
  height: 12px;
  padding-left: 3px;
`;
const ViewToggles = styled.div`
  display: flex;
`;
const Toggle = styled.button`
  background: ${(p) => (p.$on ? "#7fb4e6" : "none")};
  border-right: 1px solid #777;
  height: 7px;
  width: 6px;
`;
const Coordinate = styled.label`
  align-items: center;
  border-right: 1px solid #cfcfcf;
  display: flex;
  gap: 2px;
  height: 12px;
  padding: 0 1px;

  b {
    font-size: 6px;
    width: 5px;
  }
  input {
    background: #fff;
    border: 1px solid #d0d0d0;
    color: #666;
    height: 7px;
    padding: 0 1px;
    width: 38px;
  }
  &:last-child {
    border-right: 0;
  }
`;
const MessageRow = styled.div`
  align-items: center;
  display: flex;
  height: 10px;
`;
const Prompt = styled.div`
  border-right: 1px solid #c4c4c4;
  padding-left: 1px;
  white-space: nowrap;
  width: 109px;
`;
const Message = styled.div`
  flex: 1;
  padding-left: 8px;
`;
const Cell = styled.div`
  align-items: center;
  border-left: 1px solid #b5b5b5;
  display: flex;
  height: 7px;
  padding-left: 2px;
  width: ${(p) => p.$width}px;
`;

export default App;
